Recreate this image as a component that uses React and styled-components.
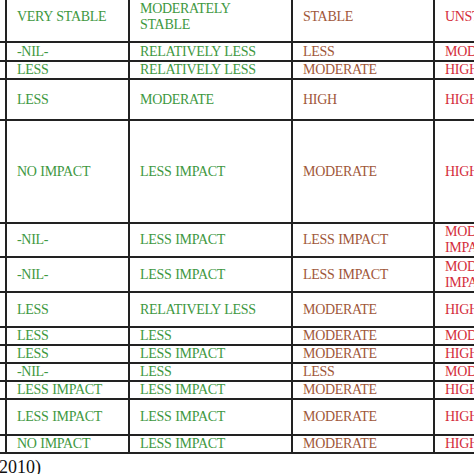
import React from 'react';
import styled, { createGlobalStyle } from 'styled-components';

const GlobalStyle = createGlobalStyle`
  html, body {
    margin: 0;
    padding: 0;
    background: #ffffff;
    overflow: hidden;
  }
  body {
    font-family: "Liberation Serif", "Times New Roman", serif;
  }
`;

const Page = styled.div`
  width: 474px;
  height: 474px;
  overflow: hidden;
  display: flex;
  flex-direction: column;
`;

const Table = styled.table`
  border-collapse: collapse;
  table-layout: fixed;
  width: 620px;
  margin-top: -10px;
  margin-left: -35px;
  font-size: 14px;
  line-height: 16px;
  letter-spacing: -0.3px;
  word-spacing: 0.5px;
`;

const Col = styled.col`
  width: ${(p) => p.$w}px;
`;

const Row = styled.tr`
  height: ${(p) => p.$h}px;
`;

const colors = {
  green: '#3e983f',
  brown: '#9f573a',
  red: '#d42d3b',
};

const Cell = styled.td`
  border: 2px solid #222;
  padding: 0 4px 0 10px;
  vertical-align: middle;
  color: ${(p) => colors[p.$tone] || '#222'};
  white-space: pre-line;
  overflow: hidden;
`;

const Caption = styled.div`
  font-size: 18px;
  color: #111;
  margin-top: 3px;
  margin-left: -1px;
`;

const widths = [40, 123, 163, 142, 152];

const rows = [
  { h: 51, c: ['VERY STABLE', 'MODERATELY\nSTABLE', 'STABLE', 'UNSTABLE'] },
  { h: 19, c: ['-NIL-', 'RELATIVELY LESS', 'LESS', 'MODERATE'] },
  { h: 18, c: ['LESS', 'RELATIVELY LESS', 'MODERATE', 'HIGH'] },
  { h: 41, c: ['LESS', 'MODERATE', 'HIGH', 'HIGH'] },
  { h: 103, c: ['NO IMPACT', 'LESS IMPACT', 'MODERATE', 'HIGH'] },
  { h: 34, c: ['-NIL-', 'LESS IMPACT', 'LESS IMPACT', 'MODERATE\nIMPACT'] },
  { h: 35, c: ['-NIL-', 'LESS IMPACT', 'LESS IMPACT', 'MODERATE\nIMPACT'] },
  { h: 35, c: ['LESS', 'RELATIVELY LESS', 'MODERATE', 'HIGH'] },
  { h: 18, c: ['LESS', 'LESS', 'MODERATE', 'MODERATE'] },
  { h: 18, c: ['LESS', 'LESS IMPACT', 'MODERATE', 'HIGH'] },
  { h: 18, c: ['-NIL-', 'LESS', 'LESS', 'MODERATE'] },
  { h: 18, c: ['LESS IMPACT', 'LESS IMPACT', 'MODERATE', 'HIGH'] },
  { h: 36, c: ['LESS IMPACT', 'LESS IMPACT', 'MODERATE', 'HIGH'] },
  { h: 17, c: ['NO IMPACT', 'LESS IMPACT', 'MODERATE', 'HIGH'] },
];

const tones = ['green', 'green', 'brown', 'red'];

export default function App() {
  return (
    <>
      <GlobalStyle />
      <Page>
        <Table>
          <colgroup>
            {widths.map((w, i) => (
              <Col key={i} $w={w} />
            ))}
          </colgroup>
          <tbody>
            {rows.map((row, i) => (
              <Row key={i} $h={row.h}>
                <Cell />
                {row.c.map((text, j) => (
                  <Cell key={j} $tone={tones[j]}>
                    {text}
                  </Cell>
                ))}
              </Row>
            ))}
          </tbody>
        </Table>
        <Caption>2010)</Caption>
      </Page>
    </>
  );
}
